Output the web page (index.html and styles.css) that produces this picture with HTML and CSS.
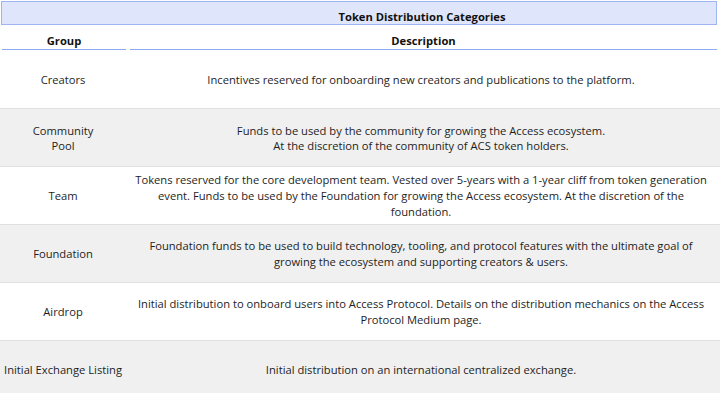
FILE: index.html
```html
<!DOCTYPE html>
<html>
<head>
<meta charset="utf-8">
<link rel="stylesheet" href="styles.css">
</head>
<body>
<div class="sheet">
  <div class="title"><span>Token Distribution Categories</span></div>
  <div class="head">
    <div class="hcell"><span>Group</span></div>
    <div class="hcell"><span>Description</span></div>
  </div>
  <div class="row">
    <div class="grp">Creators</div>
    <div class="desc">Incentives reserved for onboarding new creators and publications to the platform.</div>
  </div>
  <div class="row alt">
    <div class="grp">Community<br>Pool</div>
    <div class="desc">Funds to be used by the community for growing the Access ecosystem.<br>At the discretion of the community of ACS token holders.</div>
  </div>
  <div class="row">
    <div class="grp">Team</div>
    <div class="desc tall">Tokens reserved for the core development team. Vested over 5-years with a 1-year cliff from token generation<br>event. Funds to be used by the Foundation for growing the Access ecosystem. At the discretion of the<br>foundation.</div>
  </div>
  <div class="row alt">
    <div class="grp">Foundation</div>
    <div class="desc tall">Foundation funds to be used to build technology, tooling, and protocol features with the ultimate goal of<br>growing the ecosystem and supporting creators &amp; users.</div>
  </div>
  <div class="row">
    <div class="grp">Airdrop</div>
    <div class="desc tall">Initial distribution to onboard users into Access Protocol. Details on the distribution mechanics on the Access<br>Protocol Medium page.</div>
  </div>
  <div class="row alt">
    <div class="grp">Initial Exchange Listing</div>
    <div class="desc">Initial distribution on an international centralized exchange.</div>
  </div>
</div>
</body>
</html>
```
FILE: styles.css
```css
html, body {
  margin: 0;
  padding: 0;
  background: #ffffff;
}
body {
  font-family: "Open Sans", "DejaVu Sans", sans-serif;
  font-size: 11.2px;
  color: #1e1e1e;
}
.sheet {
  width: 720px;
}
.title {
  margin: 1px 3px 0 1px;
  height: 22px;
  background: #dfe6fb;
  border: 1px solid #9fb5f3;
  display: flex;
  align-items: flex-end;
  justify-content: center;
  padding-left: 126px;
  box-sizing: content-box;
  font-weight: 700;
  color: #111;
}
.title span {
  padding-bottom: 0;
  line-height: 15px;
}
.head {
  display: grid;
  grid-template-columns: 124px 587px;
  column-gap: 4px;
  padding-left: 2px;
  height: 25px;
}
.hcell {
  display: flex;
  align-items: flex-end;
  justify-content: center;
  border-bottom: 1.5px solid #8eaaf4;
  font-weight: 700;
  color: #111;
  padding-bottom: 1px;
}
.row {
  display: grid;
  grid-template-columns: 126px 590px;
  height: 57px;
  border-top: 1px solid #e0e0e0;
  align-items: center;
  text-align: center;
  line-height: 15px;
}
.head + .row {
  border-top: none;
  height: 58px;
}
.alt {
  background: #f0f0f0;
}
.desc {
  white-space: nowrap;
}
.tall {
  line-height: 16px;
}
```
